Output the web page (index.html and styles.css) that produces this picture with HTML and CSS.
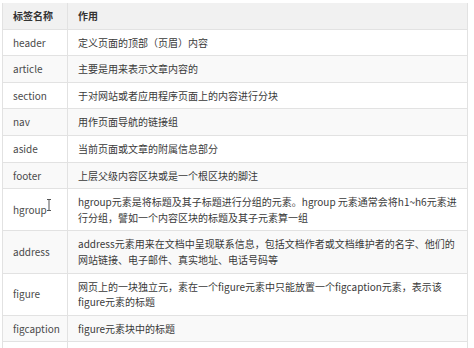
FILE: index.html
```html
<!DOCTYPE html>
<html lang="zh-CN">
<head>
<meta charset="utf-8">
<title>HTML5 语义标签</title>
<link rel="stylesheet" href="styles.css">
</head>
<body>
<table class="tags">
  <thead>
    <tr><th class="name">标签名称</th><th>作用</th></tr>
  </thead>
  <tbody>
    <tr><td class="name">header</td><td>定义页面的顶部（页眉）内容</td></tr>
    <tr><td class="name">article</td><td>主要是用来表示文章内容的</td></tr>
    <tr><td class="name">section</td><td>于对网站或者应用程序页面上的内容进行分块</td></tr>
    <tr><td class="name">nav</td><td>用作页面导航的链接组</td></tr>
    <tr><td class="name">aside</td><td>当前页面或文章的附属信息部分</td></tr>
    <tr><td class="name">footer</td><td>上层父级内容区块或是一个根区块的脚注</td></tr>
    <tr><td class="name"><span class="cursor-wrap">hgroup<svg class="ibeam" width="4" height="12" viewBox="0 0 4 12"><path d="M0 0.5h4M0 11.5h4M2 0.5v11" stroke="#555" stroke-width="1" fill="none"/></svg></span></td><td>hgroup元素是将标题及其子标题进行分组的元素。hgroup 元素通常会将h1~h6元素进行分组，譬如一个内容区块的标题及其子元素算一组</td></tr>
    <tr><td class="name">address</td><td>address元素用来在文档中呈现联系信息，包括文档作者或文档维护者的名字、他们的网站链接、电子邮件、真实地址、电话号码等</td></tr>
    <tr><td class="name">figure</td><td>网页上的一块独立元，素在一个figure元素中只能放置一个figcaption元素，表示该figure元素的标题</td></tr>
    <tr><td class="name">figcaption</td><td>figure元素块中的标题</td></tr>
    <tr><td class="name">&nbsp;</td><td>&nbsp;</td></tr>
  </tbody>
</table>
</body>
</html>
```
FILE: styles.css
```css
html, body {
  margin: 0;
  background: #ffffff;
}
body {
  padding: 3px 0 0 2px;
  font-family: "Noto Sans CJK SC", "Noto Sans", sans-serif;
  font-size: 10px;
  line-height: 15.6px;
  color: #3a3a3a;
}
.tags {
  border-collapse: collapse;
  width: 466px;
  table-layout: fixed;
}
.tags th,
.tags td {
  border: 1px solid #e2e2e2;
  padding: 5px 10px 5px 10px;
  text-align: left;
  vertical-align: middle;
}
.tags th.name,
.tags td.name {
  width: 44px;
  padding-right: 10px;
}
.tags th {
  background: #f1f1f1;
  font-weight: 700;
  color: #333333;
  border-top: none;
}
.tags td.name {
  color: #4a4a4a;
}
.tags tbody tr:nth-child(even) td {
  background: #f9f9f9;
}
.cursor-wrap {
  position: relative;
}
.ibeam {
  position: absolute;
  right: -4px;
  top: -3px;
}
```
